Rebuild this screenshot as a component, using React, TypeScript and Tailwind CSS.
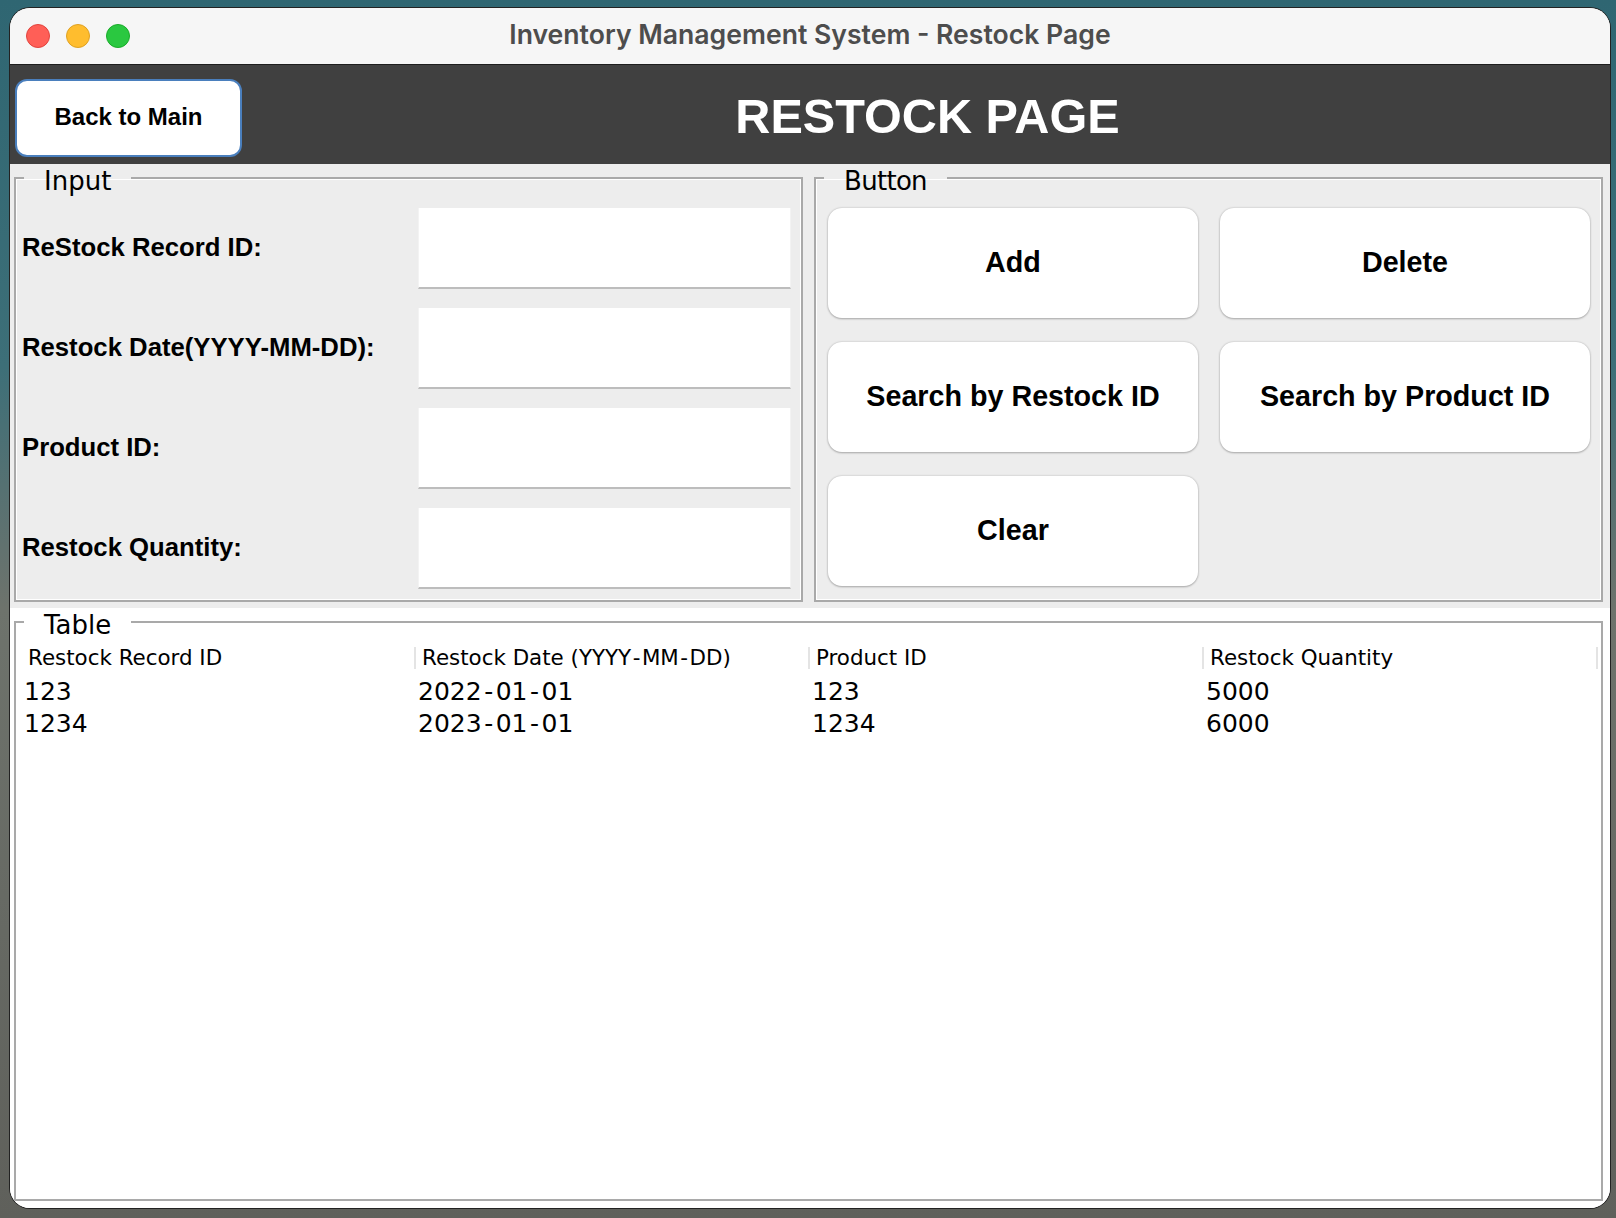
import React from 'react';

const Group: React.FC<{ title: string; className?: string; legendClass?: string; children?: React.ReactNode }> = ({ title, className, legendClass, children }) => (
  <fieldset className={`border-2 border-[#a9a9a9] shadow-[inset_1px_1px_0_#ffffff,inset_-1px_-1px_0_#ffffff] ${className ?? ''}`}>
    <legend className={`ml-[8px] h-[26px] px-[20px] font-['DejaVu_Sans',sans-serif] text-[26px] leading-[32px] text-black ${legendClass ?? ''}`}>{title}</legend>
    {children}
  </fieldset>
);

// the hyphens in the Java table font are much wider than DejaVu's
const Dashed: React.FC<{ text: string; space: string }> = ({ text, space }) => (
  <>
    {text.split('-').map((part, i) => (
      <React.Fragment key={i}>
        {i > 0 && <span className={space}>-</span>}
        {part}
      </React.Fragment>
    ))}
  </>
);

const fields = ['ReStock Record ID:', 'Restock Date(YYYY-MM-DD):', 'Product ID:', 'Restock Quantity:'];

const actions = ['Add', 'Delete', 'Search by Restock ID', 'Search by Product ID', 'Clear'];

const columns = ['Restock Record ID', 'Restock Date (YYYY-MM-DD)', 'Product ID', 'Restock Quantity'];

const rows = [
  ['123', '2022-01-01', '123', '5000'],
  ['1234', '2023-01-01', '1234', '6000'],
];

const App: React.FC = () => {
  return (
    <div className="h-[1218px] w-[1616px] overflow-hidden bg-[linear-gradient(180deg,#2f6672_0%,#3d6f78_30%,#6e736c_50%,#5f605b_100%)] pl-[10px] pr-[6px] pt-[8px] pb-[10px]">
      <div className="flex h-[1200px] flex-col overflow-hidden rounded-[20px] bg-white shadow-[0_0_0_1px_#222222]">
        {/* Title bar */}
        <div className="relative flex h-[57px] shrink-0 items-center border-b border-[#1e1e1e] bg-[#f6f6f6] pl-[16px]">
          <div className="flex gap-[16px]">
            <span className="size-[24px] rounded-full border border-[#e0443e] bg-[#ff5f57]" />
            <span className="size-[24px] rounded-full border border-[#dea123] bg-[#ffbd2e]" />
            <span className="size-[24px] rounded-full border border-[#1aab29] bg-[#2ac840]" />
          </div>
          <div className="absolute inset-x-0 pb-[2px] text-center font-['Inter',sans-serif] text-[26.6px] font-semibold text-[#4d4d4d]">
            Inventory Management System - Restock Page
          </div>
        </div>

        {/* Header */}
        <div className="flex h-[99px] shrink-0 items-center bg-[#404040] pl-[5px]">
          <button className="mt-[7px] h-[78px] w-[227px] rounded-[12px] border-2 border-[#4a7fbd] bg-white pb-[3px] font-['Liberation_Sans',sans-serif] text-[24px] font-bold text-black">
            Back to Main
          </button>
          <h1 className="flex-1 pl-[3px] pt-[4px] text-center font-['Liberation_Sans',sans-serif] text-[48.6px] font-bold text-white">RESTOCK PAGE</h1>
        </div>

        {/* Input and buttons */}
        <div className="grid h-[444px] shrink-0 grid-cols-[789px_789px] gap-[11px] bg-[#ededed] pl-[4px] pt-px">
          <Group title="Input" className="h-[437px]">
            <div className="flex flex-col gap-[19px] pl-[6px] pr-[10px] pt-[17px]">
              {fields.map((label) => (
                <div key={label} className="flex items-center">
                  <label className="w-[396px] pb-[2px] font-['Liberation_Sans',sans-serif] text-[25.7px] font-bold text-black">{label}</label>
                  <input className="h-[81px] flex-1 border-x border-b-2 border-x-[#f3f3f3] border-b-[#bdbdbd] bg-white" />
                </div>
              ))}
            </div>
          </Group>
          <Group title="Button" className="h-[437px]" legendClass="tracking-[-0.7px]">
            <div className="grid grid-cols-2 gap-x-[22px] gap-y-[24px] pl-[12px] pr-[11px] pt-[17px]">
              {actions.map((name) => (
                <button
                  key={name}
                  className="h-[110px] rounded-[14px] bg-white font-['Liberation_Sans',sans-serif] text-[28.7px] font-bold text-black shadow-[0_0_2px_#b5b5b5,0_1px_2px_#a8a8a8]"
                >
                  {name}
                </button>
              ))}
            </div>
          </Group>
        </div>

        {/* Table */}
        <div className="flex-1 bg-white pb-[5px] pl-[4px] pr-[7px] pt-px">
          <Group title="Table" className="h-[592px]">
            <div className="pl-[6px] pr-[3px] pt-[5px]">
              <table className="w-full table-fixed border-collapse font-['DejaVu_Sans',sans-serif] text-black">
                <thead>
                  <tr className="h-[36px]">
                    {columns.map((col) => (
                      <th key={col} className="p-0 pl-[6px] text-left text-[21.4px] font-normal">
                        <span className="block border-r-2 border-[#e4e4e4] leading-[22px]">
                          <Dashed text={col} space="mx-[1.5px]" />
                        </span>
                      </th>
                    ))}
                  </tr>
                </thead>
                <tbody>
                  {rows.map((row) => (
                    <tr key={row[0]} className="h-[32px]">
                      {row.map((cell, i) => (
                        <td key={i} className="p-0 pl-[2px] text-[25px] leading-[32px]">
                          <Dashed text={cell} space="mx-[2.5px]" />
                        </td>
                      ))}
                    </tr>
                  ))}
                </tbody>
              </table>
            </div>
          </Group>
        </div>
      </div>
    </div>
  );
};

export default App;
